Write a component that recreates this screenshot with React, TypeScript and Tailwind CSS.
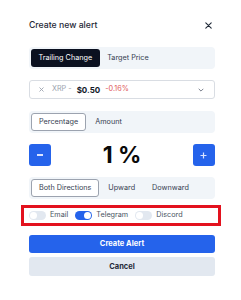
import React, { useState } from 'react';

const Toggle: React.FC<{ on: boolean; onClick: () => void }> = ({ on, onClick }) => (
    <button
        onClick={onClick}
        className={`w-[17px] h-[9px] rounded-full flex items-center px-[1px] ${on ? 'bg-[#2563eb] justify-end' : 'bg-[#e2e8f0] justify-start'}`}
    >
        <span className="w-[7px] h-[7px] rounded-full bg-white" />
    </button>
);

const App: React.FC = () => {
    const [mode, setMode] = useState('Trailing Change');
    const [unit, setUnit] = useState('Percentage');
    const [direction, setDirection] = useState('Both Directions');
    const [value, setValue] = useState(1);
    const [channels, setChannels] = useState<Record<string, boolean>>({
        Email: false,
        Telegram: true,
        Discord: false,
    });

    return (
        <div className="min-h-screen bg-white font-['Inter',sans-serif] text-[#111827]">
            <div className="ml-[29px] w-[186px] pt-[19px] flex flex-col">
                {/* Cabecera */}
                <div className="flex justify-between items-center h-[13px]">
                    <h2 className="text-[8.7px] font-medium text-[#1f2937]">Create new alert</h2>
                    <button className="mr-[3px]">
                        <svg width="7" height="7" viewBox="0 0 7 7">
                            <path d="M0.8 0.8L6.2 6.2M6.2 0.8L0.8 6.2" stroke="#1f2937" strokeWidth="1.1" strokeLinecap="round" />
                        </svg>
                    </button>
                </div>

                {/* Tipo de alerta */}
                <div className="mt-[15px] h-[22px] rounded-[4px] bg-[#f1f5f9] p-[2px] flex items-stretch">
                    {['Trailing Change', 'Target Price'].map((t) => (
                        <button
                            key={t}
                            onClick={() => setMode(t)}
                            className={`px-[7.5px] rounded-[3px] text-[7.25px] ${mode === t ? 'bg-[#0b1120] text-white' : 'text-[#374151]'}`}
                        >
                            {t}
                        </button>
                    ))}
                </div>

                {/* Moneda */}
                <div className="mt-[11px] h-[19px] border border-[#d9dde3] rounded-[3px] flex items-center pl-[9px] pr-[10px] text-[7.25px]">
                    <svg width="5" height="5" viewBox="0 0 5 5">
                        <path d="M0.5 0.5L4.5 4.5M4.5 0.5L0.5 4.5" stroke="#9ca3af" strokeWidth="0.9" />
                    </svg>
                    <span className="ml-[8px] text-[#9ca3af]">XRP -</span>
                    <span className="ml-[5px] font-bold text-[#111827] text-[8px]">$0.50</span>
                    <span className="ml-[5px] text-[#e05a5a]">-0.16%</span>
                    <svg className="ml-auto" width="6" height="4" viewBox="0 0 6 4">
                        <path d="M0.7 0.8L3 3.1L5.3 0.8" stroke="#6b7280" strokeWidth="0.9" fill="none" />
                    </svg>
                </div>

                {/* Unidad */}
                <div className="mt-[12px] h-[22px] rounded-[4px] bg-[#f1f5f9] p-[2px] flex items-stretch gap-[1px]">
                    {['Percentage', 'Amount'].map((t) => (
                        <button
                            key={t}
                            onClick={() => setUnit(t)}
                            className={`px-[7px] rounded-[3px] text-[7.25px] text-[#374151] border ${unit === t ? 'bg-white border-[#9ca3af]' : 'border-transparent'}`}
                        >
                            {t}
                        </button>
                    ))}
                </div>

                {/* Valor */}
                <div className="mt-[11px] h-[22px] flex items-center justify-between">
                    <button
                        onClick={() => setValue(Math.max(0, value - 1))}
                        className="w-[22px] h-[22px] rounded-[3px] bg-[#2563eb] flex items-center justify-center"
                    >
                        <span className="w-[6px] h-[1.5px] bg-[#dbe4ff]" />
                    </button>
                    <span className="text-[23px] font-bold text-[#0a0a0a] leading-none">{value} %</span>
                    <button
                        onClick={() => setValue(value + 1)}
                        className="w-[22px] h-[22px] rounded-[3px] bg-[#2563eb] flex items-center justify-center"
                    >
                        <svg width="7" height="7" viewBox="0 0 7 7">
                            <path d="M3.5 0.5V6.5M0.5 3.5H6.5" stroke="#dbe4ff" strokeWidth="1.2" />
                        </svg>
                    </button>
                </div>

                {/* Dirección */}
                <div className="mt-[11px] h-[22px] rounded-[4px] bg-[#f1f5f9] p-[2px] flex items-stretch gap-[1px]">
                    {['Both Directions', 'Upward', 'Downward'].map((t) => (
                        <button
                            key={t}
                            onClick={() => setDirection(t)}
                            className={`px-[7px] rounded-[3px] text-[7.25px] text-[#374151] border ${direction === t ? 'bg-white border-[#9ca3af]' : 'border-transparent'}`}
                        >
                            {t}
                        </button>
                    ))}
                </div>

                {/* Canales */}
                <div className="mt-[6px] -ml-[8px] w-[200px] h-[21px] border-[3px] border-[#e3121e] flex items-center pl-[5px] gap-[7px]">
                    {Object.keys(channels).map((c) => (
                        <div key={c} className="flex items-center gap-[4px]">
                            <Toggle on={channels[c]} onClick={() => setChannels({ ...channels, [c]: !channels[c] })} />
                            <span className="text-[7.25px] text-[#4b5563]">{c}</span>
                        </div>
                    ))}
                </div>

                <button className="mt-[9px] h-[18px] rounded-[3px] bg-[#2563eb] text-white text-[7.5px] font-bold">
                    Create Alert
                </button>
                <button className="mt-[4px] h-[19px] rounded-[3px] bg-[#e2e8f0] text-[#1f2937] text-[7.5px] font-bold">
                    Cancel
                </button>
            </div>
        </div>
    );
};

export default App;
